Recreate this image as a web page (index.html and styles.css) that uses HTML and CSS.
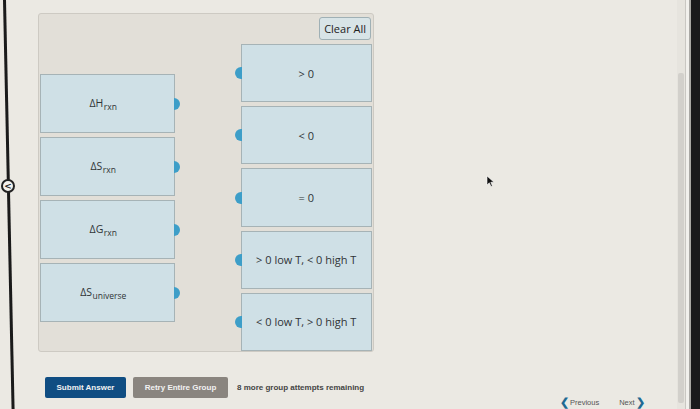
FILE: index.html
```html
<!DOCTYPE html>
<html>
<head>
<meta charset="utf-8">
<link rel="stylesheet" href="styles.css">
</head>
<body>
<div class="screen">
  <div class="leftrail">
    <div class="rail-line"></div>
    <div class="collapse">&lt;</div>
  </div>
  <main class="main">
    <section class="board">
      <div class="col-left">
        <div class="card term"><span class="lbl">ΔH<sub>rxn</sub></span><span class="dot dot-r"></span></div>
        <div class="card term"><span class="lbl">ΔS<sub>rxn</sub></span><span class="dot dot-r"></span></div>
        <div class="card term"><span class="lbl">ΔG<sub>rxn</sub></span><span class="dot dot-r"></span></div>
        <div class="card term"><span class="lbl">ΔS<sub class="uni">universe</sub></span><span class="dot dot-r"></span></div>
      </div>
      <div class="col-right">
        <div class="clear-row"><button class="clear">Clear All</button></div>
        <div class="card ans"><span class="dot dot-l"></span><span class="lbl">&gt; 0</span></div>
        <div class="card ans"><span class="dot dot-l"></span><span class="lbl">&lt; 0</span></div>
        <div class="card ans"><span class="dot dot-l"></span><span class="lbl">= 0</span></div>
        <div class="card ans"><span class="dot dot-l"></span><span class="lbl">&gt; 0 low T, &lt; 0 high T</span></div>
        <div class="card ans"><span class="dot dot-l"></span><span class="lbl">&lt; 0 low T, &gt; 0 high T</span></div>
      </div>
    </section>
    <div class="actions">
      <button class="btn submit">Submit Answer</button>
      <button class="btn retry">Retry Entire Group</button>
      <span class="remaining">8 more group attempts remaining</span>
    </div>
    <nav class="pager">
      <span class="pg"><span class="chev">❮</span>Previous</span>
      <span class="pg next">Next<span class="chev">❯</span></span>
    </nav>
    <svg class="cursor" width="9" height="13" viewBox="0 0 9 13"><path d="M1 1 L1 10 L3.3 7.8 L5 11.5 L6.4 10.9 L4.8 7.3 L8 7.2 Z" fill="#111" stroke="#fff" stroke-width="0.6"/></svg>
  </main>
  <div class="scroll"><div class="thumb"></div></div>
  <div class="bezel-light"></div>
  <div class="bezel"></div>
</div>
</body>
</html>
```
FILE: styles.css
```css
* { box-sizing: border-box; }
html, body { margin: 0; padding: 0; }
body {
  width: 700px; height: 409px; overflow: hidden;
  background: #ebe9e3;
  font-family: "Open Sans", "DejaVu Sans", sans-serif;
}
.screen { display: flex; height: 409px; }
.leftrail { width: 38px; position: relative; flex: none; }
.rail-line {
  position: absolute; left: 3px; top: 0; bottom: 0; width: 3px;
  background: #1a1a1a; transform: skewX(1.2deg); transform-origin: top;
}
.collapse {
  position: absolute; left: 1px; top: 179px; width: 14px; height: 14px;
  border-radius: 50%; background: #f4f3ef; border: 2px solid #222;
  font: bold 9px/10px "DejaVu Sans", sans-serif; color: #222; text-align: center;
}
.main { flex: 1; position: relative; padding-top: 13px; }
.board {
  width: 336px; height: 339px;
  background: #e2dfd8; border: 1px solid #cdcac3; border-radius: 3px;
  display: flex; padding: 3px 1px 0 1px; gap: 66px;
}
.col-left { width: 135px; padding-top: 57px; display: flex; flex-direction: column; gap: 4px; }
.col-right { width: 132px; display: flex; flex-direction: column; gap: 4px; }
.clear-row { display: flex; justify-content: flex-end; height: 23px; }
.clear {
  font: 11px "Open Sans", "DejaVu Sans", sans-serif; color: #222;
  background: #d8e4e7; border: 1px solid #9fb0b5; border-radius: 3px;
  padding: 0 4px; height: 23px; margin-right: 1px;
}
.card {
  position: relative; height: 59px;
  background: #cfe0e6; border: 1px solid #a6b3b6;
  display: flex; align-items: center; justify-content: center;
  font-size: 11px; color: #2f3436;
}
.term { font-size: 10.5px; padding-right: 8px; }
.term sub { font-size: 8.5px; vertical-align: -3px; line-height: 1; margin-left: 0.5px; }
.dot {
  position: absolute; top: 50%; height: 12px; margin-top: -6px;
  background: #3d9ec8;
}
.dot-r { right: -6px; border-radius: 0 6px 6px 0; width: 6px; }
.dot-l { left: -7px; border-radius: 6px 0 0 6px; width: 7px; }
.actions { display: flex; align-items: center; gap: 7px; margin: 25px 0 0 7px; }
.btn {
  height: 21px; border: none; border-radius: 2px; color: #f2f2f2;
  font: bold 8px "Liberation Sans", Arial, sans-serif; padding: 0;
}
.submit { width: 81px; background: #0f4d82; }
.retry { width: 95px; background: #8a857f; }
.remaining { font: bold 8px "Liberation Sans", Arial, sans-serif; color: #444; margin-left: 2px; }
.pager { position: absolute; left: 522px; top: 396px; display: flex; gap: 20px; font: 7.5px "Liberation Sans", Arial, sans-serif; color: #555; }
.pg { display: flex; align-items: center; gap: 1px; }
.chev { color: #1f6a93; font-size: 11px; font-weight: bold; }
.cursor { position: absolute; left: 448px; top: 175px; }
.scroll { width: 8px; flex: none; position: relative; background: #e6e4de; }
.thumb { position: absolute; left: 1px; right: 1px; top: 73px; bottom: 6px; background: #d2d0cb; border-radius: 2px; }
.bezel-light { width: 6px; flex: none; background: #f1f0ec; border-left: 1px solid #c9c7c2; border-right: 2px solid #a9a8a4; }
.bezel { width: 9px; flex: none; background: #1a1a1c; }
```
